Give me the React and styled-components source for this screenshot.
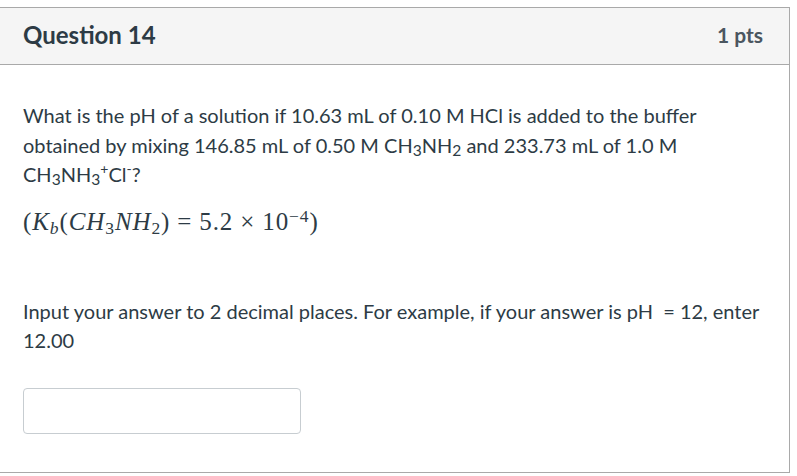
import React from "react";
import styled, { createGlobalStyle } from "styled-components";

const Global = createGlobalStyle`
  html, body { margin: 0; padding: 0; background: #fff; }
  body { font-family: Lato, "Noto Sans", sans-serif; color: #2d3b45; }
`;

const Page = styled.div`
  padding-top: 7px;
  width: 790px;
`;

const Panel = styled.div`
  border: 1px solid #a9a9a9;
  border-left: none;
  height: 466px;
  box-sizing: border-box;
  display: flex;
  flex-direction: column;
`;

const Header = styled.div`
  display: flex;
  justify-content: space-between;
  align-items: center;
  height: 57px;
  box-sizing: border-box;
  padding: 0 26px 4px 23px;
  background: #f5f5f5;
  border-bottom: 1px solid #a9a9a9;
`;

const Title = styled.div`
  font-size: 24px;
  font-weight: 700;
  color: #2d3b45;
`;

const Points = styled.div`
  font-size: 21px;
  font-weight: 700;
  color: #4b5660;
`;

const Body = styled.div`
  padding: 36px 23px 0 23px;
`;

const Para = styled.p`
  margin: 0;
  font-size: 20px;
  line-height: 29.5px;
  color: #2d3b45;
`;

const Math = styled.p`
  margin: 15px 0 0 0;
  font-family: "Liberation Serif", "DejaVu Serif", serif;
  font-size: 25px;
  line-height: 34px;
  color: #2d3b45;
  letter-spacing: 0.9px;
`;

const Var = styled.span`
  font-style: italic;
`;

const Op = styled.span`
  display: inline-block;
  padding: 0 7px;
`;

const Sub = styled.sub`
  font-size: 0.7em;
  vertical-align: -0.25em;
  line-height: 0;
`;

const Sup = styled.sup`
  font-size: 0.7em;
  vertical-align: 0.45em;
  line-height: 0;
`;

const Gap = styled.div`
  height: ${(p) => p.$h}px;
`;

const AnswerInput = styled.input`
  display: block;
  width: 278px;
  height: 46px;
  box-sizing: border-box;
  margin-top: 32px;
  border: 1px solid #c7cdd1;
  border-radius: 4px;
  background: #fff;
  font-family: Lato, sans-serif;
  font-size: 16px;
  padding: 0 10px;
  outline: none;
`;

const ChemSub = styled.sub`
  font-size: 0.78em;
  vertical-align: -0.22em;
  line-height: 0;
`;

const ChemSup = styled.sup`
  font-size: 0.7em;
  vertical-align: 0.55em;
  line-height: 0;
`;

export default function App() {
  return (
    <>
      <Global />
      <Page>
        <Panel>
          <Header>
            <Title>Question 14</Title>
            <Points>1 pts</Points>
          </Header>
          <Body>
            <Para>
              What is the pH of a solution if 10.63 mL of 0.10 M HCl is added to the buffer
              obtained by mixing 146.85 mL of 0.50 M CH<ChemSub>3</ChemSub>NH<ChemSub>2</ChemSub> and
              233.73 mL of 1.0 M CH<ChemSub>3</ChemSub>NH<ChemSub>3</ChemSub>
              <ChemSup>+</ChemSup>Cl<ChemSup>-</ChemSup>?
            </Para>
            <Math>
              (<Var>K</Var>
              <Sub><Var>b</Var></Sub>(<Var>CH</Var>
              <Sub>3</Sub>
              <Var>NH</Var>
              <Sub>2</Sub>)<Op>=</Op>5.2<Op>×</Op>10<Sup>−4</Sup>)
            </Math>
            <Gap $h={58} />
            <Para>
              Input your answer to 2 decimal places. For example, if your answer is pH&nbsp; = 12, enter
              12.00
            </Para>
            <AnswerInput type="text" aria-label="answer" />
          </Body>
        </Panel>
      </Page>
    </>
  );
}
